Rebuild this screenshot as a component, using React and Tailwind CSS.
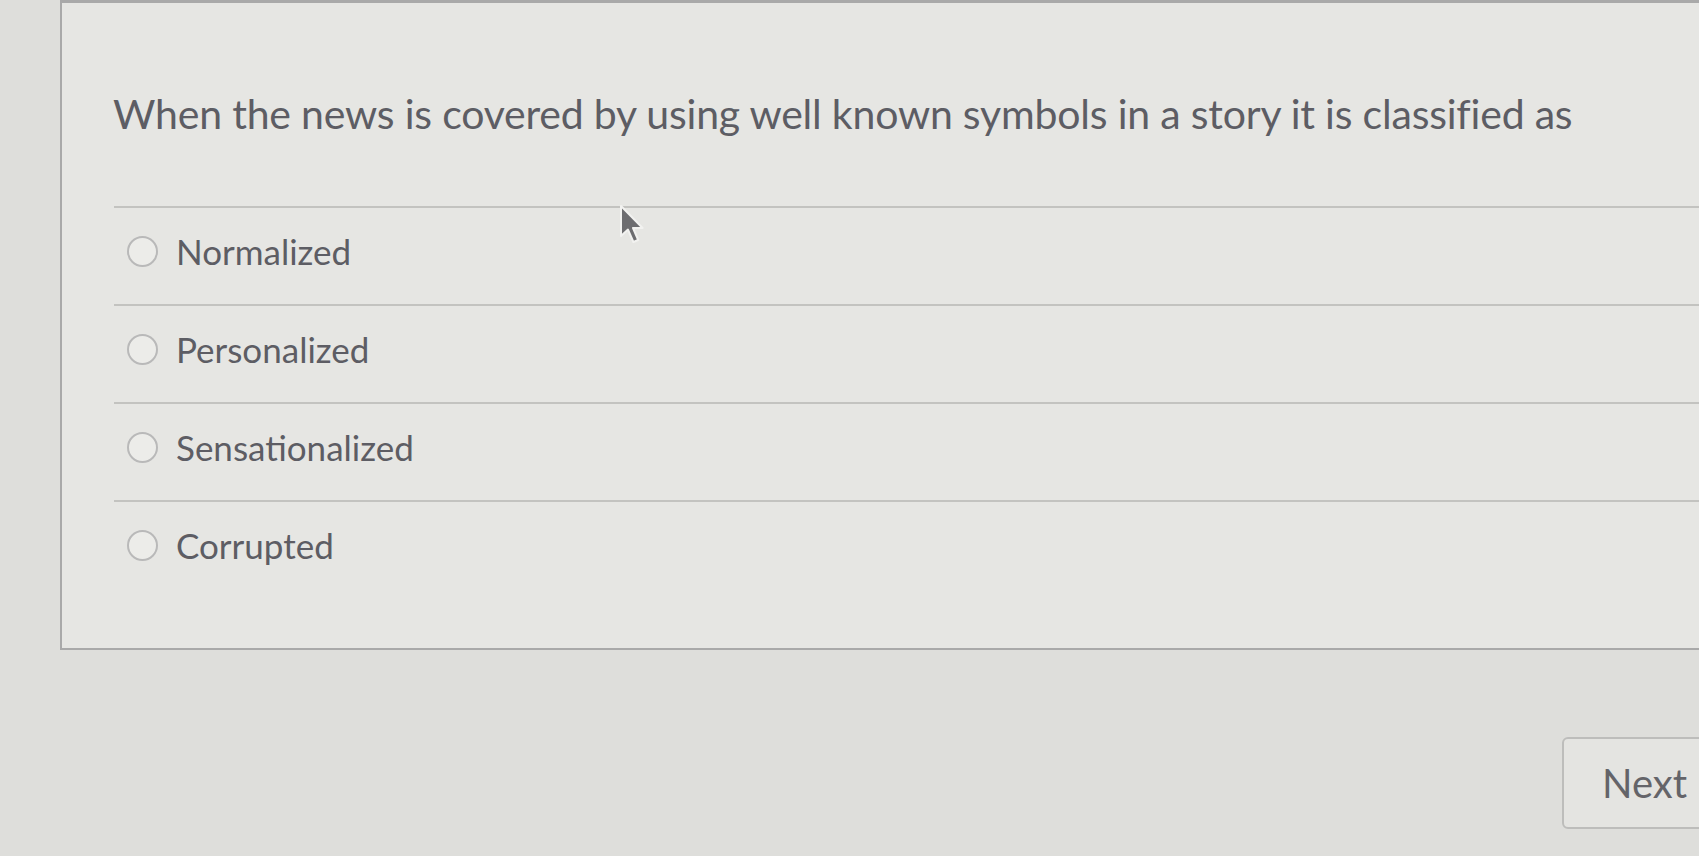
import React from 'react';

const options = ['Normalized', 'Personalized', 'Sensationalized', 'Corrupted'];

function Radio() {
  return (
    <span className="block w-[31px] h-[31px] rounded-full border-2 border-[#b9b9b9] bg-[#ecece9] shrink-0" />
  );
}

function Cursor() {
  return (
    <svg
      className="absolute left-[619px] top-[204px]"
      width="26"
      height="42"
      viewBox="0 0 13 21"
    >
      <path
        d="M1 1 L1 16 L4.5 12.8 L7.2 19 L9.6 18 L7 12 L11.8 12 Z"
        fill="#6d6d70"
        stroke="#f2f2f0"
        strokeWidth="1"
        strokeLinejoin="round"
      />
    </svg>
  );
}

export default function App() {
  return (
    <div
      className="relative h-screen overflow-hidden bg-[#dededb] text-[#5d5d64]"
      style={{ fontFamily: 'Lato, "Open Sans", sans-serif' }}
    >
      <div className="ml-[60px] mr-[-10px] bg-[#e6e6e3] border-t-[3px] border-l-2 border-b-2 border-[#a9a9a9]">
        <div className="pl-[51px] pt-[86px] pb-[67px]">
          <p className="text-[41px] leading-[50px] tracking-[-0.2px]">
            When the news is covered by using well known symbols in a story it is classified as
          </p>
        </div>

        <div className="ml-[52px] pb-[50px]">
          {options.map((opt) => (
            <div
              key={opt}
              className="flex items-center gap-[18px] h-[98px] pb-[9px] border-t-2 border-[#c3c3c0] pl-[13px]"
            >
              <Radio />
              <span className="text-[35px] leading-none">{opt}</span>
            </div>
          ))}
        </div>
      </div>

      <div className="flex justify-end mt-[87px] mr-[-20px]">
        <button className="w-[157px] h-[92px] pl-[38px] text-left rounded-[6px] border-2 border-[#bdbdbb] bg-[#e4e4e1] text-[40px] text-[#646469]">
          Next
        </button>
      </div>

      <Cursor />
    </div>
  );
}
